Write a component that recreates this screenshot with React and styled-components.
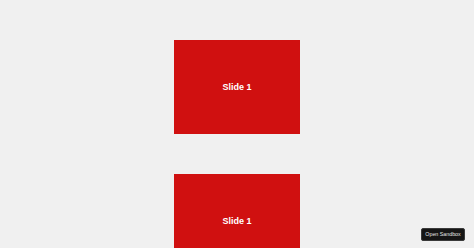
import React from "react";
import styled, { createGlobalStyle } from "styled-components";

const Global = createGlobalStyle`
  html, body { margin: 0; padding: 0; background: #f0f0f0; overflow: hidden; }
  body { font-family: "Liberation Sans", Arial, sans-serif; }
`;

const Page = styled.div`
  width: 474px;
  height: 248px;
  overflow: hidden;
  background: #f0f0f0;
  position: relative;
`;

const Track = styled.div`
  display: flex;
  flex-direction: column;
  align-items: center;
  gap: 40px;
  padding-top: 40px;
`;

const Slide = styled.div`
  width: 126px;
  height: 94px;
  flex-shrink: 0;
  background: #d01010;
  display: flex;
  align-items: center;
  justify-content: center;
  color: #ffffff;
  font-weight: 700;
  font-size: 9px;
  line-height: 10px;
`;

const SandboxButton = styled.button`
  position: absolute;
  right: 9px;
  bottom: 7px;
  width: 44px;
  height: 13px;
  padding: 0;
  border: 1px solid #3a3a3a;
  border-radius: 2px;
  background: #151515;
  color: #e6e6e6;
  font-family: "Liberation Sans", Arial, sans-serif;
  font-size: 5.3px;
  line-height: 11px;
  text-align: center;
  white-space: nowrap;
  cursor: pointer;
`;

export default function App() {
  return (
    <Page>
      <Global />
      <Track>
        <Slide>Slide 1</Slide>
        <Slide>Slide 1</Slide>
      </Track>
      <SandboxButton>Open Sandbox</SandboxButton>
    </Page>
  );
}
